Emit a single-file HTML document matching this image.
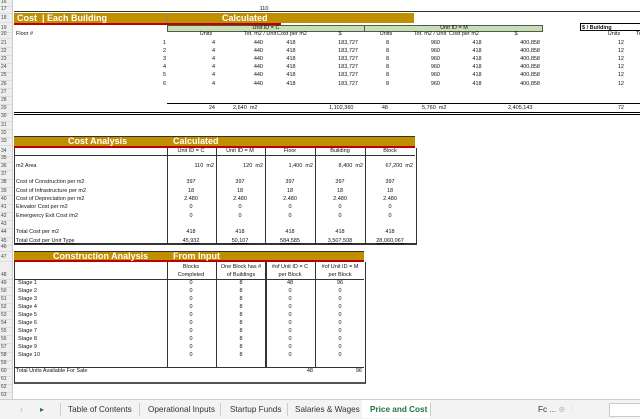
<!DOCTYPE html>
<html><head><meta charset="utf-8"><style>
body{margin:0;width:640px;height:418px;overflow:hidden;background:#fff;font-family:"Liberation Sans",sans-serif;position:relative}
.a{position:absolute;white-space:nowrap;font-size:5.5px;color:#111;line-height:7px}
.r{text-align:right}.c{text-align:center}
.b{position:absolute}
.gold{position:absolute;color:#fff;font-weight:bold;font-size:9px;line-height:9px}
.tab{position:absolute;top:405px;font-size:8.2px;color:#333;line-height:10px;white-space:nowrap}
</style></head><body>
<div class="b" style="left:0;top:0;width:12px;height:400px;background:#eeeeee;border-right:1px solid #ccc"></div>
<div id="root"></div>
<div class="b" style="left:0;top:399px;width:640px;height:19px;background:#f3f3f3;border-top:1px solid #ccc"></div>
<div class="tab" style="left:20px;color:#aaa">‹</div>
<div class="tab" style="left:40px;color:#217346">▸</div>
<div class="b" style="left:362px;top:400px;width:68px;height:18px;background:#fff"></div>
<div class="b" style="left:60px;top:403px;width:1px;height:13px;background:#ccc"></div>
<div class="b" style="left:139px;top:403px;width:1px;height:13px;background:#ccc"></div>
<div class="b" style="left:220px;top:403px;width:1px;height:13px;background:#ccc"></div>
<div class="b" style="left:287px;top:403px;width:1px;height:13px;background:#ccc"></div>
<div class="b" style="left:430px;top:403px;width:1px;height:13px;background:#ccc"></div>
<div class="tab" style="left:68px">Table of Contents</div>
<div class="tab" style="left:148px">Operational Inputs</div>
<div class="tab" style="left:230px">Startup Funds</div>
<div class="tab" style="left:295px">Salaries &amp; Wages</div>
<div class="tab" style="left:370px;color:#217346;font-weight:bold">Price and Cost</div>
<div class="tab" style="left:538px">Fc <span style="color:#217346">...</span> <span style="color:#bbb">⊕</span> <span style="color:#ccc">⋮</span></div>
<div class="b" style="left:609px;top:403px;width:31px;height:12px;background:#fff;border:1px solid #ccc"></div>
<script>
const R=document.getElementById('root');let h='';
const Y={};
Y[16]=2;Y[17]=9;Y[18]=18;Y[19]=28;Y[20]=34;
for(let r=21;r<=32;r++)Y[r]=43+(r-21)*8.2;
Y[33]=141;Y[34]=151.5;for(let r=35;r<=45;r++)Y[r]=158+(r-35)*8.3;
Y[46]=247;Y[47]=257;Y[48]=275;for(let r=49;r<=63;r++)Y[r]=283+(r-49)*8.07;
for(const r in Y){h+=`<div class="a" style="left:1px;top:${Y[r]-3.5}px;font-size:5px;color:#444">${r}</div>`;
h+=`<div class="b" style="left:0;top:${Y[r]+4}px;width:12px;height:1px;background:#ddd"></div>`}
function t(x,r,s,cls='',w=0,st=''){const y=Y[r]-3.5;
 if(cls=='r')h+=`<div class="a r" style="left:${x-60}px;width:60px;top:${y}px;${st}">${s}</div>`;
 else if(cls=='c')h+=`<div class="a c" style="left:${x-40}px;width:80px;top:${y}px;${st}">${s}</div>`;
 else h+=`<div class="a" style="left:${x}px;top:${y}px;${st}">${s}</div>`;}
function box(x,y,w,hh,st){h+=`<div class="b" style="left:${x}px;top:${y}px;width:${w}px;height:${hh}px;${st}"></div>`}
t(264,17,'110','c');
box(14,11,626,1,'background:#333');
box(14,13,400,10,'background:#bf8f00');box(14,23,267,2,'background:#c00000');
h+=`<div class="gold" style="left:17px;top:14px">Cost &nbsp;| Each Building</div><div class="gold" style="left:222px;top:14px">Calculated</div>`;
box(167,13,1,10,'background:#888');
box(167,25,197,5,'background:#c6e0b4;border:1px solid #555');box(364,25,177,5,'background:#c6e0b4;border:1px solid #555');
t(266,19,'Unit ID = C','c');t(454,19,'Unit ID = M','c');
box(580,23,60,6,'border:1px solid #000;border-right:none');t(582,19,'<b><u>$ / Building</u></b>');
t(16,20,'Floor #');
t(206,20,'Units','c');t(260,20,'Tot. m2 / Unit','c');t(292,20,'Cost per m2','c');t(340,20,'$','c');
t(386,20,'Units','c');t(430,20,'Tot. m2 / Unit','c');t(464,20,'Cost per m2','c');t(516,20,'$','c');t(614,20,'Units','c');t(636,20,'Tot');
for(let i=1;i<=6;i++){const r=20+i;t(166,r,i,'r');t(215,r,'4','r');t(263,r,'440','r');t(291,r,'418','c');t(358,r,'183,727','r');
t(389,r,'8','r');t(440,r,'960','r');t(477,r,'418','c');t(540,r,'400,858','r');t(624,r,'12','r');}
box(167,103,473,1,'background:#000');box(14,112,626,2,'border-top:1px solid #000;border-bottom:1px solid #000;height:1px');
t(215,29,'24','r');t(233,29,'2,640 &nbsp;m2');t(329,29,'1,102,360');t(388,29,'48','r');t(422,29,'5,760 &nbsp;m2');t(508,29,'2,405,143');t(624,29,'72','r');
box(14,136,401,1,'background:#333');box(14,137,401,9,'background:#bf8f00');box(14,146,401,2,'background:#c00000');
h+=`<div class="gold" style="left:68px;top:137px">Cost Analysis</div><div class="gold" style="left:173px;top:137px">Calculated</div>`;
box(14,148,401,95,'border:1px solid #333;border-top:none;border-bottom:2px solid #333');
box(14,155,401,1,'background:#333');
[167,216,265,315,365].forEach(x=>box(x,148,1,96,'background:#333'));
const cc=[191,240,290,340,390];
['Unit ID = C','Unit ID = M','Floor','Building','Block'].forEach((s,i)=>t(cc[i],34,s,'c'));
t(16,36,'m2 Area');
['110 &nbsp;m2','120 &nbsp;m2','1,400 &nbsp;m2','8,400 &nbsp;m2','67,200 &nbsp;m2'].forEach((s,i)=>t(cc[i]+23,36,s,'r'));
const L=[[38,'Cost of Construction per m2','397'],[39,'Cost of Infrastructure per m2','18'],[40,'Cost of Depreciation per m2','2.480'],[41,'Elevator Cost per m2','0'],[42,'Emergency Exit Cost /m2','0'],[44,'Total Cost per m2','418']];
L.forEach(([r,s,v])=>{t(16,r,s);cc.forEach(x=>t(x,r,v,'c'))});
t(16,45,'<u>Total Cost per Unit Type</u>');['45,932','50,107','584,585','3,507,508','28,060,067'].forEach((s,i)=>t(cc[i],45,'<u>'+s+'</u>','c'));
box(14,251,350,1,'background:#333');box(14,252,350,8,'background:#bf8f00');box(14,260,350,2,'background:#c00000');
h+=`<div class="gold" style="left:53px;top:252px">Construction Analysis</div><div class="gold" style="left:173px;top:252px">From Input</div>`;
box(14,262,350,120,'border:1px solid #333;border-top:none;border-bottom:2px solid #555');
box(14,279,350,1,'background:#333');box(14,367,350,1,'background:#333');
[167,216,265,266,315].forEach(x=>box(x,262,1,105,'background:#333'));
const c2=[191,241,290,340];
[['Blocks','Completed'],['One Block has #','of Buildings'],['#of Unit ID = C','per Block'],['#of Unit ID = M','per Block']].forEach((p,i)=>{h+=`<div class="a c" style="left:${c2[i]-30}px;width:60px;top:264px;line-height:7.5px">${p[0]}<br>${p[1]}</div>`});
for(let s=1;s<=10;s++){const r=48+s;t(18,r,'Stage '+s);t(c2[0],r,'0','c');t(c2[1],r,'8','c');t(c2[2],r,s==1?'48':'0','c');t(c2[3],r,s==1?'96':'0','c');}
t(16,60,'Total Units Available For Sale');t(313,60,'48','r');t(362,60,'96','r');
R.innerHTML=h;
</script>
</body></html>
